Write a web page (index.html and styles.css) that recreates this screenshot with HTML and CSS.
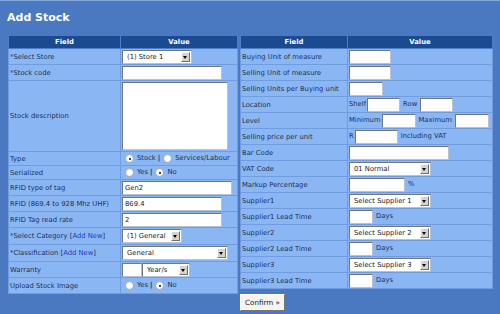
FILE: index.html
```html
<!DOCTYPE html>
<html>
<head>
<meta charset="utf-8">
<link rel="stylesheet" href="styles.css">
</head>
<body>
<div class="page">
  <h1 class="title">Add Stock</h1>
  <div class="tables">
    <table class="grid left">
      <colgroup><col class="cf-l"><col class="cv-l"></colgroup>
      <thead><tr><th>Field</th><th>Value</th></tr></thead>
      <tbody>
        <tr><td>*Select Store</td><td><span class="sel w70"><span class="st">(1) Store 1</span><span class="arrow"></span></span></td></tr>
        <tr><td>*Stock code</td><td><span class="inp w100"></span></td></tr>
        <tr class="tall"><td>Stock description</td><td><span class="area"></span></td></tr>
        <tr class="short"><td>Type</td><td class="nowrap"><span class="radio on"></span><span class="lbl">Stock</span><span class="bar">|</span><span class="radio"></span><span class="lbl">Services/Labour</span></td></tr>
        <tr class="short"><td>Serialized</td><td class="nowrap"><span class="radio"></span><span class="lbl">Yes</span><span class="bar">|</span><span class="radio on"></span><span class="lbl">No</span></td></tr>
        <tr><td>RFID type of tag</td><td><span class="inp w110">Gen2</span></td></tr>
        <tr><td class="nowrap">RFID (869.4 to 928 Mhz UHF)</td><td><span class="inp w100">869.4</span></td></tr>
        <tr><td>RFID Tag read rate</td><td><span class="inp w100">2</span></td></tr>
        <tr class="r17"><td>*Select Category [<a>Add New</a>]</td><td><span class="sel w60"><span class="st">(1) General</span><span class="arrow"></span></span></td></tr>
        <tr class="r17"><td>*Classification [<a>Add New</a>]</td><td><span class="sel w106"><span class="st">General</span><span class="arrow"></span></span></td></tr>
        <tr><td>Warranty</td><td class="nowrap"><span class="inp w20"></span><span class="sel w48 flush"><span class="st">Year/s</span><span class="arrow"></span></span></td></tr>
        <tr><td>Upload Stock Image</td><td class="nowrap"><span class="radio"></span><span class="lbl">Yes</span><span class="bar">|</span><span class="radio on"></span><span class="lbl">No</span></td></tr>
      </tbody>
    </table>
    <div class="rightcol">
      <table class="grid right">
        <colgroup><col class="cf-r"><col class="cv-r"></colgroup>
        <thead><tr><th>Field</th><th>Value</th></tr></thead>
        <tbody>
          <tr><td>Buying Unit of measure</td><td><span class="inp w42"></span></td></tr>
          <tr><td>Selling Unit of measure</td><td><span class="inp w42"></span></td></tr>
          <tr><td class="nowrap">Selling Units per Buying unit</td><td><span class="inp w34"></span></td></tr>
          <tr><td>Location</td><td class="nowrap"><span class="lbl0">Shelf</span><span class="inp w33"></span><span class="lbl">Row</span><span class="inp w33"></span></td></tr>
          <tr><td>Level</td><td class="nowrap"><span class="lbl0">Minimum</span><span class="inp w34"></span><span class="lbl">Maximum</span><span class="inp w34"></span></td></tr>
          <tr><td>Selling price per unit</td><td class="nowrap"><span class="lbl0">R</span><span class="inp w43"></span><span class="lbl">Including VAT</span></td></tr>
          <tr><td>Bar Code</td><td><span class="inp w100"></span></td></tr>
          <tr><td>VAT Code</td><td><span class="sel w82"><span class="st">01 Normal</span><span class="arrow"></span></span></td></tr>
          <tr><td>Markup Percentage</td><td class="nowrap"><span class="inp w56"></span><span class="lbl">%</span></td></tr>
          <tr><td>Supplier1</td><td><span class="sel w82"><span class="st">Select Supplier 1</span><span class="arrow"></span></span></td></tr>
          <tr><td>Supplier1 Lead Time</td><td class="nowrap"><span class="inp w24"></span><span class="lbl">Days</span></td></tr>
          <tr><td>Supplier2</td><td><span class="sel w82"><span class="st">Select Supplier 2</span><span class="arrow"></span></span></td></tr>
          <tr><td>Supplier2 Lead Time</td><td class="nowrap"><span class="inp w24"></span><span class="lbl">Days</span></td></tr>
          <tr><td>Supplier3</td><td><span class="sel w82"><span class="st">Select Supplier 3</span><span class="arrow"></span></span></td></tr>
          <tr><td>Supplier3 Lead Time</td><td class="nowrap"><span class="inp w24"></span><span class="lbl">Days</span></td></tr>
        </tbody>
      </table>
      <button class="confirm">Confirm »</button>
    </div>
  </div>
</div>
</body>
</html>
```
FILE: styles.css
```css
html, body {
  margin: 0;
  padding: 0;
}
body {
  width: 500px;
  height: 314px;
  overflow: hidden;
  background: #4a79c2;
  font-family: "DejaVu Sans", Verdana, sans-serif;
  font-size: 6.8px;
  color: #1d2f55;
}
.page {
  border-top: 1px solid #86a8dc;
  padding: 0 7px 0 8px;
}
.title {
  margin: 0;
  height: 35px;
  box-sizing: border-box;
  padding: 11px 0 0 0;
  margin-left: -1px;
  font-size: 11px;
  font-weight: bold;
  color: #ffffff;
  line-height: 12px;
}
.tables {
  display: flex;
  align-items: flex-start;
  gap: 2px;
}
.grid {
  border-collapse: collapse;
  table-layout: fixed;
}
.grid.left { width: 231px; }
.grid.right { width: 253px; }
.cf-l { width: 112px; }
.cf-r { width: 107px; }
.grid th {
  background: #1b4a90;
  color: #ffffff;
  font-weight: bold;
  height: 12px;
  padding: 0;
  line-height: 11px;
  border: 1px solid #4d7fc8;
  border-top: none;
  text-align: center;
}
.grid td {
  background: #8ab7f3;
  height: 16px;
  padding: 0 1px;
  border: 1px solid #6f9de0;
  box-sizing: border-box;
  vertical-align: middle;
  white-space: nowrap;
  overflow: hidden;
}
.grid tr.tall td { height: 71px; }
.grid tr.short td { height: 14px; }
.grid tr.r17 td { height: 17px; }
.nowrap { white-space: nowrap; }
a { color: #1f37c9; }
.inp, .sel, .area {
  display: inline-block;
  vertical-align: middle;
  box-sizing: border-box;
  background: #ffffff;
  border: 1px solid #7d8a99;
  border-color: #6d7886 #b9c3cf #b9c3cf #6d7886;
  height: 14px;
  line-height: 12px;
  padding: 0 2px;
  color: #222;
}
.area { width: 106px; height: 68px; }
.w20 { width: 20px; }
.w24 { width: 24px; }
.w33 { width: 33px; }
.w34 { width: 34px; }
.w42 { width: 42px; }
.w43 { width: 43px; }
.w48 { width: 48px; }
.w56 { width: 56px; }
.w60 { width: 60px; }
.w70 { width: 70px; }
.w82 { width: 82px; }
.w100 { width: 100px; }
.w106 { width: 106px; }
.w110 { width: 110px; }
.sel {
  position: relative;
  padding: 0 12px 0 4px;
  overflow: hidden;
}
.sel .st { color: #222; }
.arrow {
  position: absolute;
  right: 1px;
  top: 1px;
  width: 9px;
  height: 10px;
  background: #d6d3cc;
  border: 1px solid;
  border-color: #fff #6f6f6f #6f6f6f #fff;
  box-sizing: border-box;
}
.arrow::after {
  content: "";
  position: absolute;
  left: 1px;
  top: 3px;
  border-left: 2.5px solid transparent;
  border-right: 2.5px solid transparent;
  border-top: 3px solid #000;
}
.flush { margin-left: 0; }
.radio {
  display: inline-block;
  vertical-align: middle;
  width: 9px;
  height: 9px;
  border-radius: 50%;
  background: #fff;
  border: 1px solid #9aa6b4;
  box-sizing: border-box;
  position: relative;
  margin-left: 3px;
}
.radio.on::after {
  content: "";
  position: absolute;
  left: 2.5px;
  top: 2.5px;
  width: 2px;
  height: 2px;
  border-radius: 50%;
  background: #000;
}
.lbl { margin-left: 3px; }
.lbl0 { margin-right: 1px; }
.bar { margin-left: 2px; font-weight: bold; }
.inp + .lbl, .lbl + .inp { margin-left: 3px; }
.rightcol {
  display: flex;
  flex-direction: column;
  align-items: flex-start;
}
.confirm {
  margin-top: 5px;
  height: 17px;
  padding: 0 4px;
  font-family: "DejaVu Sans", Verdana, sans-serif;
  font-size: 7.2px;
  color: #222;
  background: #f4f4f4;
  border: 1px solid #aaa;
  border-color: #fff #777 #777 #fff;
  border-radius: 1px;
}
```
